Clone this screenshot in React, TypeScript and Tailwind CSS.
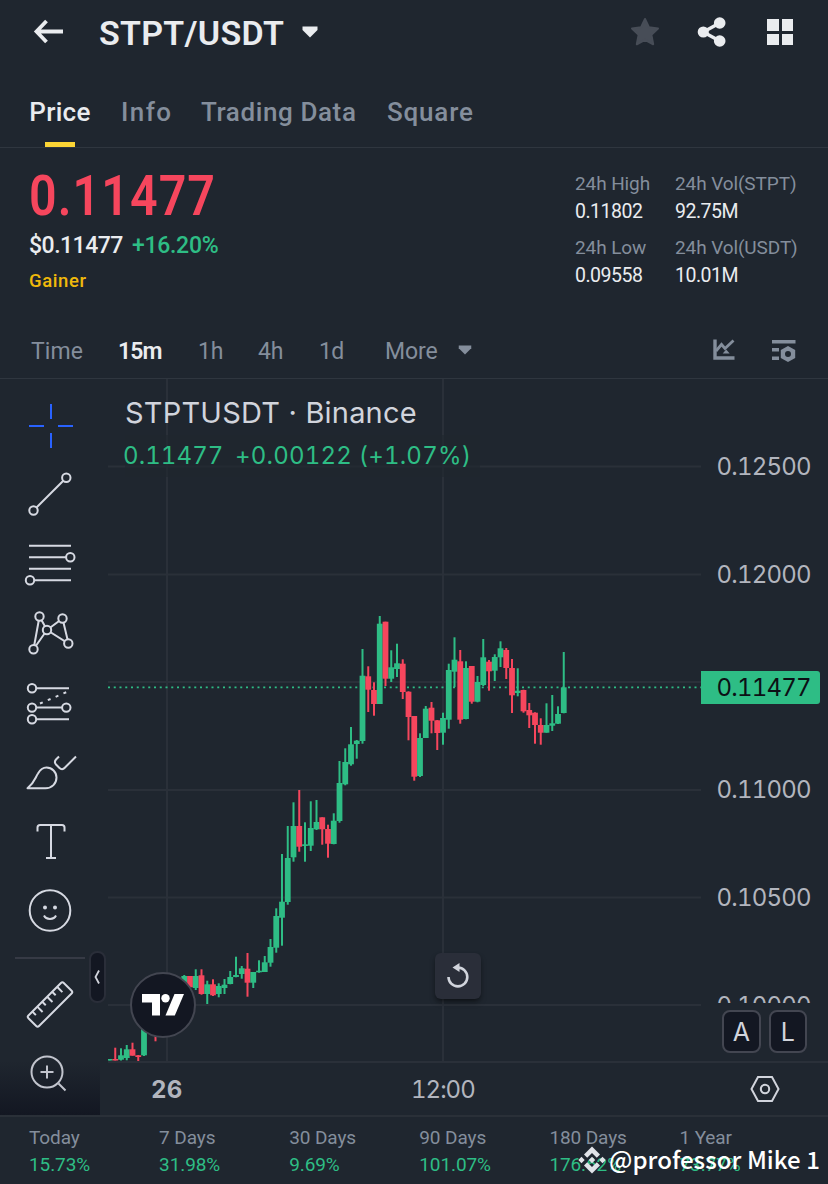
import type { ReactNode } from "react";

type Candle = [up: 0 | 1, high: number, top: number, bottom: number, low: number];

const GREEN = "#2ebd85";
const RED = "#f6465d";

// 15m candles, y values are page offsets, the chart starts at CHART_TOP
const CHART_TOP = 379;
const STEP = 5.75;
const FIRST_X = 1.5;

const candles: Candle[] = [
  [1, 1059, 1059, 1060.5, 1060.5],
  [0, 1047.7, 1059, 1060.5, 1060.5],
  [1, 1048.3, 1055.3, 1059.7, 1060.5],
  [1, 1045, 1049.3, 1058, 1060.3],
  [0, 1042.7, 1049.3, 1055.7, 1055.7],
  [0, 1055, 1055.3, 1057, 1061],
  [1, 1020, 1022, 1055.3, 1056],
  [1, 1000, 1005, 1022, 1025],
  [0, 1000, 1005, 1020, 1041.3],
  [1, 990, 995, 1020, 1022],
  [1, 985, 990, 1000, 1005],
  [0, 985, 990, 1000, 1005],
  [1, 980, 982, 998, 1000],
  [1, 975, 976, 985, 986],
  [0, 976, 976, 987.3, 987.3],
  [1, 969.3, 976, 988, 990],
  [0, 969.3, 975.3, 994, 994.7],
  [1, 980.7, 984.3, 994, 1004],
  [0, 979.3, 984.3, 995.3, 996],
  [1, 983.3, 986, 994, 997.3],
  [1, 979, 984.7, 988, 994],
  [1, 971, 977, 984, 984.3],
  [1, 956.7, 975, 977, 977.3],
  [1, 966, 968.3, 974, 978.7],
  [0, 953, 968.7, 982.7, 996.7],
  [1, 972, 972, 982.7, 988],
  [1, 960.3, 970.7, 972.3, 972.7],
  [1, 956, 962.3, 972, 972],
  [1, 939, 947, 962.7, 966.7],
  [1, 908.3, 916, 947.7, 952.7],
  [1, 854, 901.7, 917.7, 945.7],
  [1, 826, 858, 902, 904.7],
  [1, 802.3, 826, 857.3, 861.7],
  [0, 790, 826, 846.7, 851.7],
  [1, 822.3, 844.3, 846, 861.7],
  [1, 801.3, 828, 845.7, 851],
  [1, 800, 822, 829.3, 830],
  [0, 817.3, 817.3, 829.3, 844.7],
  [0, 824.7, 829, 843.7, 857.7],
  [1, 813.3, 820.7, 844, 844.3],
  [1, 761, 783, 821, 822.7],
  [1, 748.3, 762, 784.3, 785.3],
  [1, 727, 744.3, 764.3, 765.7],
  [1, 740, 740.7, 744, 758.7],
  [1, 649, 675.7, 741, 743.7],
  [0, 666.3, 676.3, 689.7, 712],
  [0, 682.3, 690, 704, 715.7],
  [1, 616, 623.7, 704, 704],
  [0, 621.7, 621.7, 678.7, 686],
  [1, 650.3, 667.3, 678.7, 682],
  [1, 643.7, 663.3, 669, 677],
  [0, 659.3, 663.7, 692, 699],
  [0, 691.3, 691.7, 717, 740.3],
  [0, 716, 716, 776.7, 780.7],
  [1, 733.3, 738, 776, 777],
  [1, 706, 708.7, 738, 738],
  [0, 702, 707.7, 720.7, 733.3],
  [0, 720, 720.3, 733, 750],
  [1, 712.7, 718, 732.7, 744.7],
  [1, 663.7, 670, 719.7, 728.7],
  [1, 637.3, 659.7, 671.7, 687],
  [0, 650, 661.3, 719.7, 723.7],
  [1, 661.3, 668, 719, 719.3],
  [0, 666, 666, 701.7, 703.7],
  [1, 676, 682, 701.7, 702.3],
  [1, 639, 657.3, 685, 686],
  [0, 660, 661.7, 671.3, 690.7],
  [1, 654.3, 657, 670.7, 681],
  [1, 641.3, 648.3, 657.3, 667],
  [0, 648, 650, 668, 679],
  [0, 659, 668, 695.3, 713],
  [1, 668.3, 690.7, 693, 696.3],
  [0, 689.7, 690, 711.3, 712.7],
  [0, 703, 710, 715.3, 728],
  [0, 712.3, 712.7, 725, 743.7],
  [0, 718.3, 725, 732.7, 744.7],
  [1, 703.3, 725, 732.7, 732.7],
  [1, 695, 723.3, 725.7, 731],
  [1, 706.3, 714, 723.7, 724],
  [1, 652, 687.3, 713, 713.3],
];

const gridLines = [87.5, 195.5, 303, 411, 518.5, 626];

const periods = [
  { label: "Today", value: "15.73%" },
  { label: "7 Days", value: "31.98%" },
  { label: "30 Days", value: "9.69%" },
  { label: "90 Days", value: "101.07%" },
  { label: "180 Days", value: "176.62%" },
  { label: "1 Year", value: "73.77%" },
];

export default function App() {
  return (
    <div className="relative w-[828px] h-[1184px] overflow-hidden bg-[#1f262f] font-['Roboto',sans-serif] text-[#eaecef] whitespace-nowrap">
      <Header />
      <Tabs />
      <PriceSummary />
      <Intervals />
      <div className="flex h-[736px]">
        <Toolbar />
        <div className="flex-1 pl-2">
          <div className="relative flex h-[682px]">
            <Chart />
            <PriceAxis />
          </div>
          <TimeAxis />
        </div>
      </div>
      <Performance />
      <Watermark />
    </div>
  );
}

function Caret({ className }: { className: string }) {
  return (
    <svg viewBox="0 0 16 12" className={className} fill="currentColor">
      <path d="M0.5 0.5h15v3.5L8 11.5 0.5 4z" />
    </svg>
  );
}

function Header() {
  return (
    <div className="flex h-16 items-center pl-[33px] pr-[35px]">
      <svg width="31" height="26" viewBox="0 0 31 26" fill="none" stroke="currentColor" strokeWidth="3.8">
        <path d="M30 12.5H4M13.5 2 3.5 12.5 13.5 23" />
      </svg>
      <h1 className="ml-[35px] w-[185px] text-[34px] leading-none font-semibold tracking-[0.3px] mt-0.5">
        STPT/USDT
      </h1>
      <Caret className="ml-[18px] w-4 h-3" />
      <div className="ml-auto flex items-center">
        <svg width="30" height="30" viewBox="0 0 30 30" fill="#474d57" stroke="#474d57" strokeWidth="2" strokeLinejoin="round">
          <path d="M15 2l3.9 8.3 9.1 1.2-6.6 6.4 1.8 9.4-8.2-4.5-8.2 4.5 1.8-9.4L2 11.5l9.1-1.2z" />
        </svg>
        <svg className="ml-[37px]" width="30" height="30" viewBox="0 0 30 30" fill="currentColor">
          <path d="M22.7 6 6.3 15l16.4 9" fill="none" stroke="currentColor" strokeWidth="3.4" />
          <circle cx="6.3" cy="15" r="5.6" />
          <circle cx="22.7" cy="6" r="5.8" />
          <circle cx="22.7" cy="24" r="5.8" />
        </svg>
        <div className="ml-[40px] grid grid-cols-2 gap-[3px]">
          <i className="size-[11.5px] bg-current" />
          <i className="size-[11.5px] bg-current" />
          <i className="size-[11.5px] bg-current" />
          <i className="size-[11.5px] bg-current" />
        </div>
      </div>
    </div>
  );
}

function Tabs() {
  return (
    <div className="flex h-[84px] items-end border-b border-[#2f363f] pl-[29px] text-[26px] leading-none font-medium text-[#848e9c]">
      <div className="flex h-[48px] w-[62px] flex-col items-center justify-between text-[#eaecef]">
        <span className="tracking-[0.3px]">Price</span>
        <i className="h-[5px] w-[30px] bg-[#fcd535]" />
      </div>
      <span className="ml-[30px] h-[48px] w-[51px] tracking-[1.4px]">Info</span>
      <span className="ml-[29px] h-[48px] w-[156px] tracking-[0.6px]">Trading Data</span>
      <span className="ml-[30px] h-[48px] tracking-[0.8px]">Square</span>
    </div>
  );
}

function PriceSummary() {
  return (
    <div className="flex h-[176px] justify-between pl-[29px] pr-[29px]">
      <div className="w-[200px] pt-[21px]">
        <div className="origin-left scale-x-88 text-[55px] leading-[54px] font-semibold tracking-[1.2px] text-[#f6465d]">0.11477</div>
        <div className="mt-[11px] flex gap-[9px] text-[23px] leading-[23px] font-medium">
          <span className="w-[94px] tracking-[-0.5px]">$0.11477</span>
          <span className="text-[#2ebd85] tracking-[-0.3px]">+16.20%</span>
        </div>
        <div className="mt-[15px] text-[18.5px] leading-[18px] font-medium tracking-[0.6px] text-[#f0b90b]">Gainer</div>
      </div>
      <div className="grid grid-cols-[100px_124px] content-start gap-y-[12px] pt-[24px]">
        <Stat title="24h High" value="0.11802" />
        <Stat title="24h Vol(STPT)" value="92.75M" />
        <Stat title="24h Low" value="0.09558" />
        <Stat title="24h Vol(USDT)" value="10.01M" />
      </div>
    </div>
  );
}

function Stat({ title, value }: { title: string; value: string }) {
  return (
    <div>
      <div className="text-[19px] leading-[24px] tracking-[-0.1px] text-[#848e9c]">{title}</div>
      <div className="mt-[4px] text-[19.5px] leading-[24px] tracking-[-0.5px]">{value}</div>
    </div>
  );
}

function Intervals() {
  return (
    <div className="flex h-[55px] items-center border-b border-[#2f363f] pl-[31px] pr-[31px] pt-0.5 text-[23px] text-[#848e9c]">
      <span className="w-[87px] tracking-[0.1px]">Time</span>
      <span className="w-[80px] font-semibold tracking-[-0.9px] text-[#eaecef]">15m</span>
      <span className="w-[60px] tracking-[-0.3px]">1h</span>
      <span className="w-[61px] tracking-[-0.3px]">4h</span>
      <span className="w-[66px] tracking-[-0.8px]">1d</span>
      <span className="w-[53px] tracking-[-0.1px]">More</span>
      <Caret className="ml-[20px] mb-[4px] h-[10px] w-[14px]" />
      <svg className="ml-auto mb-1" width="22" height="22" viewBox="0 0 22 22" fill="none" stroke="currentColor">
        <path d="M2 0.5V19h19.5" strokeWidth="3.4" />
        <path d="M3 12l5.5-6.5L12 9.500l8.500-8" strokeWidth="2.800" />
        <path d="M13.200 10.500l3.500 4h-7z" fill="currentColor" stroke="none" />
      </svg>
      <svg className="ml-[36px] mb-0.5" width="26" height="24" viewBox="0 0 26 24" fill="currentColor">
        <path d="M1 1h23.500v3.600H1zM1 9h7v3.600H1zM1 17.400h7V21H1z" />
        <path fillRule="evenodd" d="M17 7l7.200 4v8L17 23l-7.200-4v-8zM17 12a3 3 0 1 0 0 6 3 3 0 0 0 0-6z" />
      </svg>
    </div>
  );
}

function Tool({ children, stroke = "#d6d9e2" }: { children: ReactNode; stroke?: string }) {
  return (
    <div className="flex h-[69.5px] items-center justify-center">
      <svg width="60" height="60" viewBox="-30 -30 60 60" fill="none" stroke={stroke} strokeWidth="2">
        {children}
      </svg>
    </div>
  );
}

function Node({ x, y }: { x: number; y: number }) {
  return <circle cx={x} cy={y} r="4.2" fill="#1f262f" />;
}

function Toolbar() {
  return (
    <div className="relative w-[100px] pt-3">
      {/* crosshair */}
      <Tool stroke="#2962ff">
        <path d="M1-22v15M1 7v15M-21 0h15M8 0h15" />
      </Tool>
      {/* trend line */}
      <Tool>
        <path d="M-16.500 15.500 16.300-17.200" />
        <Node x={-16.5} y={15.5} />
        <Node x={16.3} y={-17.2} />
      </Tool>
      {/* fib retracement */}
      <Tool>
        <path d="M-21-19.300h42M-21-7.700h42M-21 3.800h42M-21 15.300h42" />
        <Node x={20.3} y={-7.7} />
        <Node x={-20} y={15.3} />
      </Tool>
      {/* pattern */}
      <Tool>
        <path d="M-10.500-17.500-16.500 15.300-3-4zM-3-4 12.500-15.500l6 25z" />
        <Node x={-10.5} y={-17.5} />
        <Node x={12.5} y={-15.5} />
        <Node x={-3} y={-4} />
        <Node x={-16.5} y={15.3} />
        <Node x={18.3} y={9.5} />
      </Tool>
      {/* forecast */}
      <Tool>
        <path d="M-18-15.700h37M-18 3.600h34M-18 15.300h37" />
        <path d="M-10-.5 18-12.500" strokeDasharray="3 5.500" />
        <Node x={-18} y={-15.7} />
        <Node x={-18} y={3.6} />
        <Node x={16.3} y={3.6} />
        <Node x={-18} y={15.3} />
      </Tool>
      {/* brush */}
      <Tool>
        <path d="M-22.500 15.200C-15 9-15 5-12 .5-9.500-4-6.500-5.500-3.500-5.500c5.500 0 10 4.500 10 10 0 6-4.500 10.700-11 10.700z" strokeLinejoin="round" />
        <path d="M9-16.500l-3 3c-1.300 1.500-1.300 3.500 0 5l3.500 3.500c1.500 1.500 3.700 1.500 5 0L26-16.500" />
      </Tool>
      {/* text */}
      <Tool>
        <path d="M-12.500-11.500v-4q0-2.500 2.500-2.500h22q2.500 0 2.500 2.500v4M1-18v33M-4 15h10" />
      </Tool>
      {/* emoji */}
      <Tool>
        <circle cx="0" cy="-1.5" r="20.300" />
        <circle cx="-5" cy="-4.500" r="2" fill="#d6d9e2" stroke="none" />
        <circle cx="5" cy="-4.500" r="2" fill="#d6d9e2" stroke="none" />
        <path d="M-6 3.500C-4 8 4 8 6 3.500" />
      </Tool>
      <div className="mt-[10px] ml-[15px] h-[2px] w-[70px] bg-[#363a45]" />
      <div className="absolute inset-x-0 bottom-0 h-[54px] bg-linear-to-b from-[#131722]/0 to-[#131722]" />
      <svg className="relative ml-5 mt-4" width="60" height="60" viewBox="-30 -30 60 60" fill="none" stroke="#d6d9e2" strokeWidth="2">
        <g transform="translate(0 -.5) rotate(-45)">
          <rect x="-25" y="-7.500" width="50" height="15" rx="2" />
          <path d="M-17.500-7.500v5M-10.500-7.500v7.500M-3.500-7.500v5M3.500-7.500v7.500M10.500-7.500v5M17.500-7.500v7.500" />
        </g>
      </svg>
      <svg className="relative ml-5 mt-[8px]" width="60" height="60" viewBox="-30 -30 60 60" fill="none" stroke="#c1c4cd" strokeWidth="2">
        <circle cx="-3" cy="-1" r="15.500" />
        <path d="M-9.500-1h13M-3-7.500v13M8.500 10.500l7 7" />
      </svg>
      <button className="absolute -right-[6px] top-[572px] flex h-[52px] w-[17px] items-center justify-center rounded-lg border-2 border-[#2a2e39] bg-[#131722]">
        <svg className="mr-px shrink-0" width="6" height="14" viewBox="0 0 6 14" fill="none" stroke="#d1d4dc" strokeWidth="1.800">
          <path d="M5 .5 1.500 7 5 13.500" />
        </svg>
      </button>
    </div>
  );
}

function Chart() {
  return (
    <div className="relative w-[593px]">
      <svg width="593" height="683" viewBox="0 0 593 683" className="block">
        <g stroke="#2a3039" strokeWidth="2">
          {gridLines.map((y) => (
            <line key={y} x1="0" x2="593" y1={y} y2={y} />
          ))}
          <line x1="59" x2="59" y1="0" y2="682" />
          <line x1="335" x2="335" y1="0" y2="682" />
        </g>
        <line x1="0" x2="593" y1="308.300" y2="308.300" stroke={GREEN} strokeWidth="1.800" strokeDasharray="2 3.750" />
        {candles.map(([up, high, top, bottom, low], i) => {
          const x = FIRST_X + i * STEP;
          return (
            <g key={i} fill={up ? GREEN : RED}>
              <rect x={x - 1} y={high - CHART_TOP} width="2" height={low - high} />
              <rect x={x - 2.9} y={top - CHART_TOP} width="5.800" height={bottom - top} />
            </g>
          );
        })}
      </svg>
      {/* legend */}
      <div className="absolute left-[8px] top-[12px] w-[364px] pl-[9px] font-['Inter',sans-serif] leading-none">
        <div className="h-[44px] pt-[7px] text-[29px] tracking-[0.2px] text-[#d1d4dc]">STPTUSDT · Binance</div>
        <div className="flex h-[42px] items-center bg-[#1f262f]/60 text-[24px] tabular-nums text-[#2ebd85]">
          <span className="-ml-0.5 w-[112px] tracking-[0.1px]">0.11477</span>
          <span className="tracking-[0.2px]">+0.00122 (+1.07%)</span>
        </div>
      </div>
      <div className="absolute left-[22px] top-[593px] flex size-[66px] items-center justify-center rounded-full border-2 border-[#434651] bg-[#131722]">
        <svg width="42" height="22" viewBox="0 0 42 22" fill="#fff">
          <path d="M0 0h18v21.500H10V8.500H0z" />
          <circle cx="23.500" cy="4.200" r="4.200" />
          <path d="M32.500 0H42l-9.200 21.500h-9.300z" />
        </svg>
      </div>
      <div className="absolute left-[327px] top-[574px] flex size-[46px] items-center justify-center rounded-md bg-[#2a2e39] shadow-md shadow-black/40">
        <svg width="24" height="26" viewBox="0 0 24 26" fill="none" stroke="#d1d4dc" strokeWidth="2.600">
          <path d="M2.500 14a9.400 9.400 0 1 0 9.400-9.400" />
          <path d="M13.500 0v9L6.500 4.600z" fill="#d1d4dc" stroke="none" />
        </svg>
      </div>
    </div>
  );
}

function PriceAxis() {
  return (
    <div className="relative flex-1 font-['Inter',sans-serif] text-[24px] leading-[30px] tabular-nums tracking-[-0.8px] text-[#b2b5be]">
      <div className="h-[624px] overflow-hidden pl-[15.5px] pt-[73px]">
        <div className="h-[107.75px]">0.12500</div>
        <div className="h-[215.5px]">0.12000</div>
        <div className="h-[107.75px]">0.11000</div>
        <div className="h-[107.75px]">0.10500</div>
        <div>0.10000</div>
      </div>
      <div className="flex gap-2 pl-[21px] pt-[7px]">
        <span className="flex h-[43px] w-[38.500px] items-center justify-center rounded-lg border-2 border-[#434651] bg-[#131722] text-[25px] tracking-normal text-[#d1d4dc]">A</span>
        <span className="flex h-[43px] w-[38.500px] items-center justify-center rounded-lg border-2 border-[#434651] bg-[#131722] text-[25px] tracking-normal text-[#d1d4dc]">L</span>
      </div>
      <div className="absolute left-0 top-[292px] h-[33px] w-[119px] rounded-r-[3px] bg-[#2ebd85] pl-[15.5px] leading-[33px] text-[#0c1015]">
        0.11477
      </div>
    </div>
  );
}

function TimeAxis() {
  return (
    <div className="flex h-[54px] items-center border-t-2 border-[#2a3039] pt-0.5 font-['Inter',sans-serif] text-[24px] leading-none text-[#b2b5be]">
      <span className="w-[118px] text-center font-bold tracking-[0.5px]">26</span>
      <span className="ml-[185px] tabular-nums tracking-[-1px]">12:00</span>
      <svg className="ml-auto mr-[48px]" width="30" height="28" viewBox="0 0 30 28" fill="none" stroke="#d1d4dc" strokeWidth="2">
        <path d="M8 1h14l6.500 12L22 25H8L1.500 13z" />
        <circle cx="15" cy="13" r="4.200" />
      </svg>
    </div>
  );
}

function Performance() {
  return (
    <div className="flex h-[69px] border-t-2 border-[#2a3038] pl-[29px] pt-[9px]">
      {periods.map((p) => (
        <div key={p.label} className="w-[130.100px]">
          <div className="text-[19px] leading-[24px] tracking-[-0.1px] text-[#848e9c]">{p.label}</div>
          <div className="mt-[3px] text-[19px] leading-[24px] tracking-[-0.1px] text-[#2ebd85]">{p.value}</div>
        </div>
      ))}
    </div>
  );
}

function Watermark() {
  return (
    <div className="absolute left-[578px] top-[1142px] flex items-center gap-[3px] font-['Noto_Sans_CJK_SC',sans-serif] text-[24px] leading-[34px] font-medium tracking-[0.05px] text-white">
      <svg className="mt-px" width="28" height="28" viewBox="0 0 28 28" fill="#e1e3e8">
        <path d="M14 .5l8 8-3.200 3.200L14 7l-4.800 4.700L6 8.500zM14 27.500l8-8-3.200-3.200L14 21l-4.800-4.700L6 19.500zM14 10.800l3.200 3.200-3.200 3.200-3.200-3.200zM3.500 10.800L6.700 14l-3.200 3.200L.3 14zM24.500 10.800l3.200 3.200-3.200 3.200-3.200-3.200z" />
      </svg>
      <span>@professor Mike 1</span>
    </div>
  );
}
